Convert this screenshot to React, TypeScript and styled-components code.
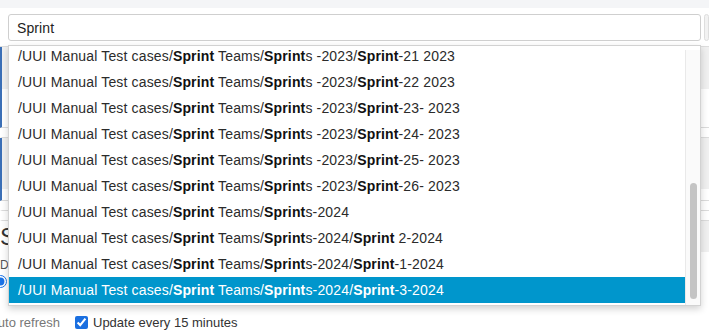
import { useLayoutEffect, useRef } from "react";
import styled, { createGlobalStyle } from "styled-components";

const GlobalStyle = createGlobalStyle`
    body {
        margin: 0;
        background: #fff;
        font-family: "Liberation Sans", Arial, Helvetica, sans-serif;
        color: #333;
        overflow: hidden;
    }
`;

const Page = styled.div`
    width: 709px;
    height: 330px;
    overflow: hidden;
    display: flex;
    flex-direction: column;
`;

const TopStrip = styled.div`
    height: 8px;
    background: #f4f5f7;
    flex: none;
`;

const Toolbar = styled.div`
    display: flex;
    gap: 3px;
    padding: 6px 0 5px 8px;
    flex: none;
`;

const SearchWrap = styled.div`
    position: relative;
    width: 693px;
    flex: none;
`;

const SearchInput = styled.input`
    display: block;
    box-sizing: border-box;
    width: 100%;
    height: 27px;
    padding: 0 8px;
    border: 1px solid #cfcfcf;
    border-radius: 3px;
    font-family: inherit;
    font-size: 14px;
    letter-spacing: 0.1px;
    color: #222;
    outline: none;
`;

const SideButton = styled.div`
    flex: 1;
    height: 27px;
    background: #f2f2f2;
    border: 1px solid #dedede;
    border-radius: 3px;
    box-sizing: border-box;
`;

const Dropdown = styled.div`
    position: absolute;
    top: calc(100% + 4px);
    left: 0;
    right: 0;
    z-index: 10;
    display: flex;
    background: #fff;
    border: 1px solid #d2d2d2;
    box-shadow: 0 3px 7px rgba(0, 0, 0, 0.18);
`;

const ScrollArea = styled.div`
    flex: 1;
    height: 259px;
    overflow: hidden;
`;

const ScrollTrack = styled.div`
    flex: none;
    width: 15px;
    box-sizing: border-box;
    margin-top: 4px;
    padding: 0 3px 6px 4px;
    display: flex;
    flex-direction: column;
    justify-content: flex-end;
    background: #fafafa;
    border-left: 1px solid #e9e9e9;
`;

const ScrollThumb = styled.div`
    height: 116px;
    border-radius: 4px;
    background: #c4c4c4;
`;

const OptionList = styled.div`
    padding-bottom: 2px;
`;

const Option = styled.div<{ $active?: boolean }>`
    height: 26px;
    line-height: 26px;
    padding: 0 9px;
    font-size: 14px;
    letter-spacing: 0.15px;
    white-space: nowrap;
    color: ${(p) => (p.$active ? "#fff" : "#2b2b2b")};
    background: ${(p) => (p.$active ? "#0096cc" : "transparent")};

    b {
        color: ${(p) => (p.$active ? "#fff" : "#111")};
    }
`;

const Results = styled.div`
    border-top: 1px solid #ddd;
    flex: none;
`;

const ResultRow = styled.div<{ $h: number; $shade?: boolean; $mark?: boolean; $line?: boolean }>`
    height: ${(p) => p.$h}px;
    background: ${(p) => (p.$shade ? "#f0f0f0" : "#fff")};
    border-left: 2px solid ${(p) => (p.$mark ? "#3b6fb6" : "transparent")};
    border-bottom: ${(p) => (p.$line ? "1px solid #dcdcdc" : "none")};
`;

const SectionHead = styled.div`
    display: flex;
    align-items: center;
    justify-content: space-between;
    height: 31px;
`;

const Heading = styled.h2`
    margin: 0;
    font-size: 24px;
    font-weight: 400;
    color: #333;
`;

const GhostButton = styled.div`
    width: 80px;
    height: 31px;
    background: #f0f0f0;
`;

const FieldLabel = styled.div`
    margin-top: 6px;
    font-size: 12px;
    line-height: 14px;
    color: #555;
`;

const RadioRow = styled.label`
    display: flex;
    align-items: center;
    height: 16px;
    margin-top: 2px;
    font-size: 13px;

    input {
        margin: 0 6px 0 -6px;
        accent-color: #1a73e8;
    }
`;

const CheckRow = styled.div`
    display: flex;
    align-items: center;
    height: 16px;
    margin-top: 26px;
    font-size: 13px;
`;

const LabelCell = styled.div`
    width: 60px;
    flex: none;
    display: flex;
    justify-content: flex-end;
    white-space: nowrap;
    color: #777;
`;

const Check = styled.input`
    margin: 0 5px 0 15px;
    width: 13px;
    height: 13px;
    accent-color: #1a6fe0;
`;

const CheckText = styled.span`
    color: #333;
    white-space: nowrap;
`;

const BASE = "/UUI Manual Test cases/Sprint Teams";

const paths = [
    "",
    "/Sprints -2023",
    "/Sprints -2023/Sprint-12 2023",
    "/Sprints -2023/Sprint-13 2023",
    "/Sprints -2023/Sprint-14 2023",
    "/Sprints -2023/Sprint-15 2023",
    "/Sprints -2023/Sprint-16 2023",
    "/Sprints -2023/Sprint-17 2023",
    "/Sprints -2023/Sprint-18 2023",
    "/Sprints -2023/Sprint-19 2023",
    "/Sprints -2023/Sprint-20 2023",
    "/Sprints -2023/Sprint-21 2023",
    "/Sprints -2023/Sprint-22 2023",
    "/Sprints -2023/Sprint-23- 2023",
    "/Sprints -2023/Sprint-24- 2023",
    "/Sprints -2023/Sprint-25- 2023",
    "/Sprints -2023/Sprint-26- 2023",
    "/Sprints-2024",
    "/Sprints-2024/Sprint 2-2024",
    "/Sprints-2024/Sprint-1-2024",
    "/Sprints-2024/Sprint-3-2024",
];

function highlight(text: string, query: string) {
    const parts = text.split(query);
    return parts.map((part, i) => (
        <span key={i}>
            {part}
            {i < parts.length - 1 && <b>{query}</b>}
        </span>
    ));
}

export default function App() {
    const scrollRef = useRef<HTMLDivElement>(null);
    const query = "Sprint";

    useLayoutEffect(() => {
        const el = scrollRef.current;
        if (el) el.scrollTop = el.scrollHeight;
    }, []);

    return (
        <Page>
            <GlobalStyle />
            <TopStrip />
            <Toolbar>
                <SearchWrap>
                    <SearchInput value={query} readOnly autoFocus />
                    <Dropdown>
                        <ScrollArea ref={scrollRef}>
                            <OptionList>
                                {paths.map((p, i) => (
                                    <Option key={p} $active={i === paths.length - 1}>
                                        {highlight(BASE + p, query)}
                                    </Option>
                                ))}
                            </OptionList>
                        </ScrollArea>
                        <ScrollTrack>
                            <ScrollThumb />
                        </ScrollTrack>
                    </Dropdown>
                </SearchWrap>
                <SideButton />
            </Toolbar>
            <Results>
                <ResultRow $h={42} $shade $mark />
                <ResultRow $h={38} $mark $line />
                <ResultRow $h={9} $line />
                <ResultRow $h={51} $shade $mark />
                <ResultRow $h={11} $mark $line />
                <ResultRow $h={9} $line />
                <ResultRow $h={9} $line />
            </Results>
            <SectionHead>
                <Heading>Sync settings</Heading>
                <GhostButton />
            </SectionHead>
            <FieldLabel>Display as</FieldLabel>
            <RadioRow>
                <input type="radio" name="display" defaultChecked />
                Tree
            </RadioRow>
            <CheckRow>
                <LabelCell>Auto refresh</LabelCell>
                <Check type="checkbox" defaultChecked />
                <CheckText>Update every 15 minutes</CheckText>
            </CheckRow>
        </Page>
    );
}
